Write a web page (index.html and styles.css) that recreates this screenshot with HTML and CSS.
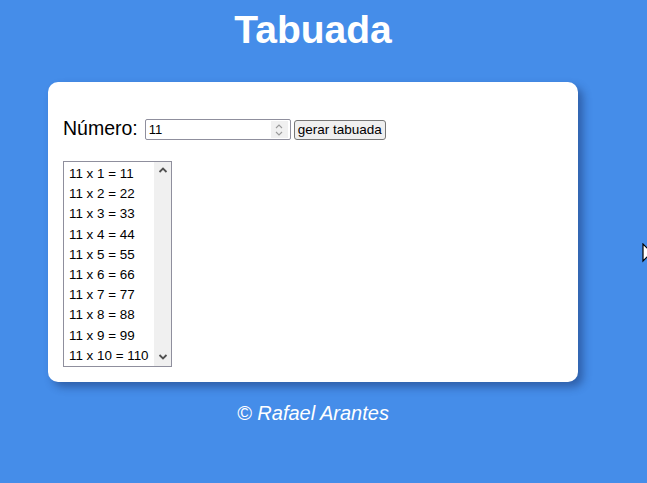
FILE: index.html
```html
<!DOCTYPE html>
<html lang="pt-BR">
<head>
<meta charset="utf-8">
<title>Tabuada</title>
<link rel="stylesheet" href="styles.css">
</head>
<body>
<div class="page">
  <h1 class="title">Tabuada</h1>
  <main class="card">
    <div class="row">
      <label class="label" for="num">Número:</label>
      <div class="numinput">
        <span class="numval">11</span>
        <span class="spin">
          <svg width="10" height="16" viewBox="0 0 10 16"><path d="M2 6 L5 3 L8 6" fill="none" stroke="#9a9a9a" stroke-width="1.1"/><path d="M2 10 L5 13 L8 10" fill="none" stroke="#9a9a9a" stroke-width="1.1"/></svg>
        </span>
      </div>
      <button class="btn" type="button">gerar tabuada</button>
    </div>
    <div class="list">
      <div class="options">
        <div class="opt">11 x 1 = 11</div>
        <div class="opt">11 x 2 = 22</div>
        <div class="opt">11 x 3 = 33</div>
        <div class="opt">11 x 4 = 44</div>
        <div class="opt">11 x 5 = 55</div>
        <div class="opt">11 x 6 = 66</div>
        <div class="opt">11 x 7 = 77</div>
        <div class="opt">11 x 8 = 88</div>
        <div class="opt">11 x 9 = 99</div>
        <div class="opt">11 x 10 = 110</div>
      </div>
      <div class="scroll">
        <svg class="arrow" width="10" height="8" viewBox="0 0 10 8"><path d="M1.5 6 L5 2.5 L8.5 6" fill="none" stroke="#505050" stroke-width="1.8"/></svg>
        <svg class="arrow" width="10" height="8" viewBox="0 0 10 8"><path d="M1.5 2 L5 5.5 L8.5 2" fill="none" stroke="#505050" stroke-width="1.8"/></svg>
      </div>
    </div>
  </main>
  <footer class="footer">© Rafael Arantes</footer>
</div>
<svg class="cursor" width="6" height="20" viewBox="0 0 6 20"><path d="M1 1 L1 18 L6 13 L6 6 Z" fill="#fff" stroke="#000" stroke-width="1.2"/></svg>
</body>
</html>
```

FILE: styles.css
```css
html, body {
  margin: 0;
  padding: 0;
}
body {
  background: #458de9;
  font-family: "Liberation Sans", Arial, sans-serif;
  width: 647px;
  height: 483px;
  overflow: hidden;
  position: relative;
}
.page {
  width: 626px;
  display: flex;
  flex-direction: column;
  align-items: center;
}
.title {
  margin: 8px 0 0;
  font-size: 39px;
  line-height: 44px;
  font-weight: bold;
  color: #fff;
}
.card {
  margin-top: 30px;
  width: 530px;
  height: 300px;
  box-sizing: border-box;
  background: #fff;
  border-radius: 10px;
  box-shadow: 5px 5px 9px rgba(20, 40, 90, 0.45);
  padding: 37px 15px 0;
}
.row {
  display: flex;
  align-items: center;
  height: 21px;
}
.label {
  font-size: 19.5px;
  color: #000;
  margin-right: 7px;
  position: relative;
  top: -1px;
}
.numinput {
  width: 146px;
  height: 21px;
  box-sizing: border-box;
  border: 1px solid #8f8f9d;
  border-radius: 2px;
  display: flex;
  align-items: center;
  justify-content: space-between;
  padding-left: 3px;
  background: #fff;
}
.numval {
  font-size: 13px;
  color: #000;
}
.spin {
  width: 17px;
  height: 17px;
  margin-right: 2px;
  background: #f0f0f0;
  display: flex;
  align-items: center;
  justify-content: center;
}
.btn {
  margin-left: 3px;
  width: 92px;
  height: 20px;
  padding: 0;
  font-family: "Liberation Sans", Arial, sans-serif;
  font-size: 13.5px;
  color: #000;
  background: #efefef;
  border: 1px solid #767676;
  border-radius: 3px;
}
.list {
  margin-top: 21px;
  width: 109px;
  height: 206px;
  box-sizing: border-box;
  border: 1px solid #8f8f9d;
  display: flex;
  background: #fff;
}
.options {
  flex: 1;
  padding: 2px 0 0 5px;
}
.opt {
  font-size: 13.4px;
  line-height: 20.2px;
  color: #000;
  white-space: nowrap;
}
.scroll {
  width: 17px;
  background: #f0f0f0;
  display: flex;
  flex-direction: column;
  justify-content: space-between;
  align-items: center;
  padding: 4px 0 5px;
  box-sizing: border-box;
}
.arrow {
  display: block;
}
.footer {
  margin-top: 20px;
  font-size: 20px;
  line-height: 23px;
  font-style: italic;
  color: #fff;
}
.cursor {
  position: absolute;
  left: 642px;
  top: 243px;
}
```
